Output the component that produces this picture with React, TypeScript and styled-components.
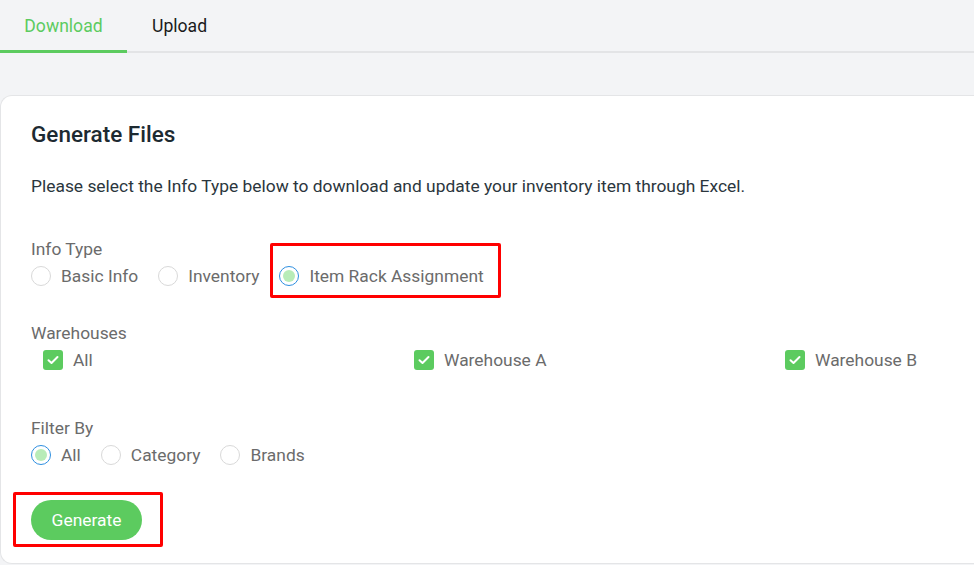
import styled, { createGlobalStyle } from "styled-components";

const GlobalStyle = createGlobalStyle`
  html, body {
    margin: 0;
    padding: 0;
    background: #f3f4f6;
    overflow: hidden;
  }
  body {
    font-family: Roboto, "Liberation Sans", Arial, sans-serif;
  }
`;

const Page = styled.div`
  width: 974px;
  height: 565px;
  background: #f3f4f6;
  display: flex;
  flex-direction: column;
`;

const TabBar = styled.div`
  display: flex;
  height: 53px;
  border-bottom: 2px solid #e3e4e6;
  box-sizing: border-box;
`;

const Tab = styled.div<{ $active?: boolean }>`
  width: ${({ $active }) => ($active ? "127px" : "auto")};
  padding: ${({ $active }) => ($active ? "2px 0 0" : "2px 25px 0")};
  display: flex;
  align-items: center;
  justify-content: center;
  font-size: 17.6px;
  font-weight: 400;
  color: ${({ $active }) => ($active ? "#5ccb5f" : "#1b1b1b")};
  box-sizing: border-box;
  margin-bottom: -2px;
  border-bottom: 3px solid ${({ $active }) => ($active ? "#5ccb5f" : "transparent")};
`;

const Card = styled.div`
  margin-top: 42px;
  height: 469px;
  box-sizing: border-box;
  background: #ffffff;
  border: 1px solid #e4e5e7;
  border-right: none;
  border-radius: 12px 0 0 12px;
  padding: 24px 30px 22px;
`;

const Title = styled.h2`
  margin: 0;
  font-size: 22.5px;
  line-height: 28px;
  font-weight: 500;
  color: #1d2a31;
`;

const Description = styled.p`
  margin: 26px 0 0;
  font-size: 17.4px;
  line-height: 24px;
  color: #2b363d;
`;

const Section = styled.div<{ $gap: number }>`
  margin-top: ${({ $gap }) => $gap}px;
  display: flex;
  flex-direction: column;
  gap: 4px;
`;

const Label = styled.div`
  font-size: 17.4px;
  line-height: 22px;
  color: #6b6b6b;
`;

const OptionRow = styled.div`
  display: flex;
  align-items: center;
  gap: 20px;
  height: 24px;
`;

const Option = styled.label`
  display: flex;
  align-items: center;
  gap: 10px;
  font-size: 17.4px;
  color: #6b6b6b;
  white-space: nowrap;
`;

const RadioCircle = styled.span<{ $checked?: boolean }>`
  width: 20px;
  height: 20px;
  box-sizing: border-box;
  border-radius: 50%;
  border: 1px solid ${({ $checked }) => ($checked ? "#2e8fe0" : "#d9d9d9")};
  background: #fff;
  display: flex;
  align-items: center;
  justify-content: center;
  &::after {
    content: "";
    width: 12px;
    height: 12px;
    border-radius: 50%;
    background: ${({ $checked }) => ($checked ? "#b8ecb8" : "transparent")};
  }
`;

const Highlight = styled.span<{ $t: number; $r: number; $b: number; $l: number }>`
  position: relative;
  display: inline-flex;
  &::after {
    content: "";
    position: absolute;
    top: ${({ $t }) => -$t}px;
    right: ${({ $r }) => -$r}px;
    bottom: ${({ $b }) => -$b}px;
    left: ${({ $l }) => -$l}px;
    border: 3px solid #ff0000;
    border-radius: 2px;
    pointer-events: none;
  }
`;

const CheckGrid = styled.div`
  display: grid;
  grid-template-columns: 371px 371px auto;
  height: 24px;
  align-items: center;
`;

const CheckOption = styled.label`
  display: flex;
  align-items: center;
  gap: 10px;
  padding-left: 12px;
  font-size: 17.4px;
  color: #6b6b6b;
  white-space: nowrap;
`;

const CheckBox = styled.span`
  width: 20px;
  height: 20px;
  border-radius: 3px;
  background: #5ccb5f;
  display: flex;
  align-items: center;
  justify-content: center;
`;

const ButtonWrap = styled.div`
  margin-top: 33px;
  display: flex;
`;

const GenerateButton = styled.button`
  width: 111px;
  height: 40px;
  border: none;
  border-radius: 20px;
  background: #5ccb5f;
  color: #ffffff;
  font-family: inherit;
  font-size: 17.4px;
  font-weight: 400;
  cursor: pointer;
`;

function Radio({ label, checked }: { label: string; checked?: boolean }) {
  return (
    <Option>
      <RadioCircle $checked={checked} />
      {label}
    </Option>
  );
}

function Check({ label }: { label: string }) {
  return (
    <CheckOption>
      <CheckBox>
        <svg width="12" height="10" viewBox="0 0 12 10" fill="none">
          <path d="M1.5 5.2 L4.5 8 L10.5 2" stroke="#fff" strokeWidth="2" strokeLinecap="round" strokeLinejoin="round" />
        </svg>
      </CheckBox>
      {label}
    </CheckOption>
  );
}

export default function App() {
  return (
    <Page>
      <GlobalStyle />
      <TabBar>
        <Tab $active>Download</Tab>
        <Tab>Upload</Tab>
      </TabBar>
      <Card>
        <Title>Generate Files</Title>
        <Description>
          Please select the Info Type below to download and update your inventory item through Excel.
        </Description>

        <Section $gap={40}>
          <Label>Info Type</Label>
          <OptionRow>
            <Radio label="Basic Info" />
            <Radio label="Inventory" />
            <Highlight $t={23} $r={17} $b={12} $l={9}>
              <Radio label="Item Rack Assignment" checked />
            </Highlight>
          </OptionRow>
        </Section>

        <Section $gap={34}>
          <Label>Warehouses</Label>
          <CheckGrid>
            <Check label="All" />
            <Check label="Warehouse A" />
            <Check label="Warehouse B" />
          </CheckGrid>
        </Section>

        <Section $gap={45}>
          <Label>Filter By</Label>
          <OptionRow>
            <Radio label="All" checked />
            <Radio label="Category" />
            <Radio label="Brands" />
          </OptionRow>
        </Section>

        <ButtonWrap>
          <Highlight $t={8} $r={21} $b={7} $l={18}>
            <GenerateButton>Generate</GenerateButton>
          </Highlight>
        </ButtonWrap>
      </Card>
    </Page>
  );
}
